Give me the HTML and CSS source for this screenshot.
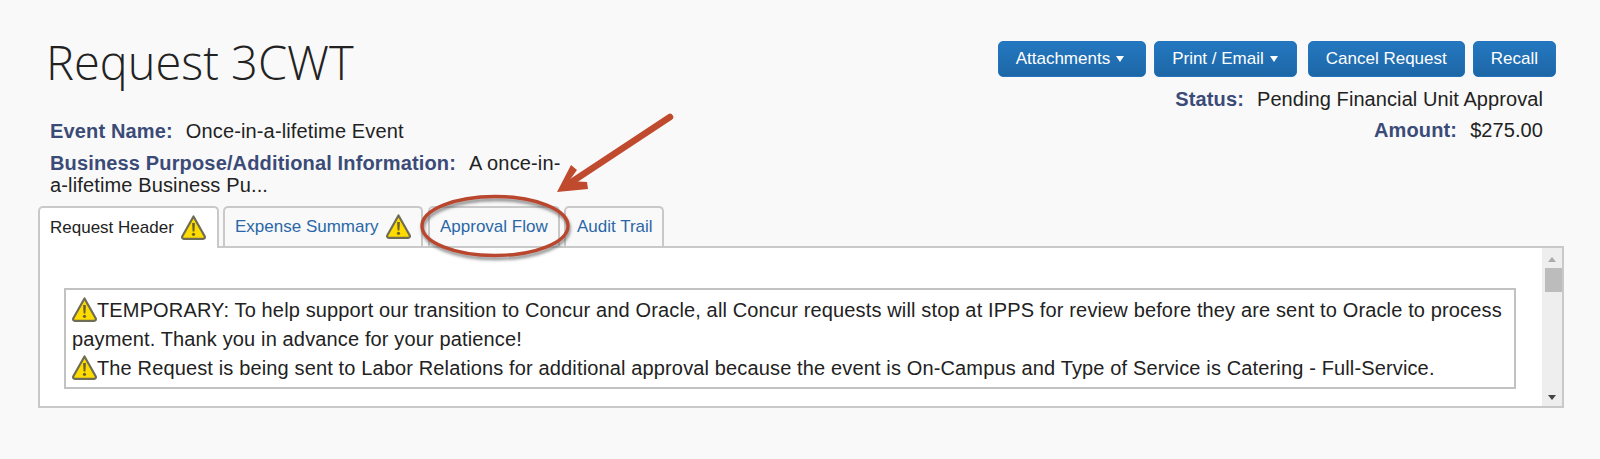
FILE: index.html
```html
<!DOCTYPE html>
<html lang="en">
<head>
<meta charset="utf-8">
<title>Request 3CWT</title>
<link rel="stylesheet" href="styles.css">
</head>
<body>
<svg width="0" height="0" class="defs">
  <symbol id="warn" viewBox="0 0 25 25">
    <path d="M12.5 1.500 L23.800 21.500 Q24.200 23.800 22.200 23.800 L2.800 23.800 Q0.800 23.800 1.200 21.500 Z" fill="#ffdc00" stroke="#6f6c55" stroke-width="2.200" stroke-linejoin="round"/>
    <path d="M11.100 8 h2.800 l-.5 8.500 h-1.800 Z" fill="#6b6233"/>
    <circle cx="12.500" cy="19.300" r="1.600" fill="#6b6233"/>
  </symbol>
</svg>
<main class="page">
  <header class="head">
    <div class="head-left">
      <h1 class="title">Request 3CWT</h1>
      <p class="field"><b class="label">Event Name:</b>Once-in-a-lifetime Event</p>
      <p class="field purpose"><b class="label">Business Purpose/Additional Information:</b>A once-in-<br>a-lifetime Business Pu...</p>
    </div>
    <div class="head-right">
      <div class="actions">
        <button class="btn">Attachments<i class="caret caret-wide"></i></button>
        <button class="btn btn-print">Print / Email<i class="caret"></i></button>
        <button class="btn">Cancel Request</button>
        <button class="btn">Recall</button>
      </div>
      <p class="meta"><b class="label">Status:</b>Pending Financial Unit Approval</p>
      <p class="meta"><b class="label">Amount:</b>$275.00</p>
    </div>
  </header>
  <nav class="tabs">
    <a class="tab active t1">Request Header<svg class="tab-icon"><use href="#warn"/></svg></a>
    <a class="tab t2">Expense Summary<svg class="tab-icon"><use href="#warn"/></svg></a>
    <a class="tab t3">Approval Flow</a>
    <a class="tab t4">Audit Trail</a>
  </nav>
  <section class="panel">
    <div class="panel-body">
      <div class="notice">
        <svg class="notice-icon"><use href="#warn"/></svg>TEMPORARY: To help support our transition to Concur and Oracle, all Concur requests will stop at IPPS for review before they are sent to Oracle to process payment. Thank you in advance for your patience!<br>
        <svg class="notice-icon"><use href="#warn"/></svg>The Request is being sent to Labor Relations for additional approval because the event is On-Campus and Type of Service is Catering - Full-Service.
      </div>
    </div>
    <div class="scrollbar">
      <span class="arrow up"></span>
      <span class="thumb"></span>
      <span class="arrow down"></span>
    </div>
  </section>
</main>
<svg class="markup" width="1600" height="459" viewBox="0 0 1600 459">
  <defs>
    <filter id="shadow" x="-10%" y="-20%" width="120%" height="150%">
      <feDropShadow dx="1" dy="3" stdDeviation="1.800" flood-color="#555" flood-opacity=".65"/>
    </filter>
  </defs>
  <ellipse cx="495" cy="226" rx="73" ry="29.500" fill="none" stroke="#b9472f" stroke-width="3.400" filter="url(#shadow)"/>
  <path d="M670 117 L570 183" stroke="#bf4a2e" stroke-width="6.500" fill="none" stroke-linecap="round"/>
  <path d="M557 192 L571 165 L577 170 L569 181 L587 182 L588 189 Z" fill="#bf4a2e"/>
</svg>
</body>
</html>
```
FILE: styles.css
```css
* { box-sizing: border-box; }
html, body { margin: 0; height: 459px; overflow: hidden; }
body {
  background: #f9f9f9;
  color: #222;
  font-family: "Liberation Sans", Arial, sans-serif;
  font-size: 20px;
  letter-spacing: .14px;
  position: relative;
}
.defs { position: absolute; }
.page { padding: 41px 38px 0 38px; width: 1600px; }
.head { display: flex; justify-content: space-between; height: 165px; }
.head-left { width: 530px; padding-left: 9px; }
.title {
  margin: -10px 0 0 -1px;
  font-family: "Open Sans", sans-serif;
  font-weight: 300;
  font-size: 47px;
  letter-spacing: 0;
  line-height: 62px;
  color: #222;
}
.field { margin: 27px 0 0 3px; line-height: 22px; }
.field.purpose { margin-top: 10px; }
.label { color: #3b4b78; font-weight: 700; margin-right: 13px; letter-spacing: .15px; }
.head-right { display: flex; flex-direction: column; align-items: flex-end; padding-right: 19px; }
.actions { display: flex; gap: 8px; margin-right: -13px; margin-bottom: 11px; }
.btn {
  height: 36px;
  padding: 0 17px;
  border: 1px solid #2274bc;
  border-radius: 5px;
  background: linear-gradient(#2478c0, #1d67a6);
  color: #fff;
  font: 17px "Liberation Sans", Arial, sans-serif;
  display: flex;
  align-items: center;
}
.btn-print { margin-right: 3px; }
.caret {
  width: 0; height: 0; margin-left: 6px; margin-right: 1px;
  border-left: 4px solid transparent;
  border-right: 4px solid transparent;
  border-top: 6px solid #fff;
}
.caret-wide { margin-right: 4px; }
.meta { margin: 0 0 8px; line-height: 23px; letter-spacing: .08px; }
.tabs { display: flex; height: 41px; gap: 4px; position: relative; z-index: 1; margin-bottom: -1px; }
.tab {
  height: 40px;
  padding: 0 10px;
  border: 2px solid #c9c9c9;
  border-bottom: none;
  border-radius: 5px 5px 0 0;
  background: #f9f9f9;
  color: #2a67a8;
  font-size: 17px;
  letter-spacing: 0;
  white-space: nowrap;
  display: flex;
  align-items: center;
}
.tab.active { height: 42px; background: #fff; color: #222; }
.t1 { width: 181px; } .t2 { width: 200px; margin-right: 1px; } .t3 { width: 132px; } .t4 { width: 100px; padding-left: 11px; }
.tab-icon { width: 25px; height: 25px; margin: -1px 0 0 7px; flex: none; }
.t2 .tab-icon { margin-left: 7px; }
.panel {
  height: 162px;
  border: 2px solid #c9c9c9;
  background: #fff;
  display: flex;
  justify-content: space-between;
  width: 1526px;
}
.panel-body { flex: 1; padding: 40px 24px 0 24px; }
.notice {
  width: 1452px;
  height: 101px;
  border: 2px solid #c2c2c2;
  padding: 6px 6px 0 6px;
  line-height: 29px;
  background: #fff;
}
.notice-icon { width: 25px; height: 25px; vertical-align: -5px; }
.scrollbar {
  width: 20px;
  background: #eee;
  display: flex;
  flex-direction: column;
  align-items: center;
  padding: 9px 0 6px;
  position: relative;
}
.thumb { width: 17px; height: 24px; background: #bcbcbc; margin-top: 6px; margin-left: 2px; }
.arrow { width: 0; height: 0; border-left: 4.500px solid transparent; border-right: 4.500px solid transparent; }
.arrow.up { border-bottom: 5px solid #aaa; }
.arrow.down { border-top: 5px solid #444; margin-top: auto; }
.markup { position: absolute; left: 0; top: 0; pointer-events: none; z-index: 2; }
```
